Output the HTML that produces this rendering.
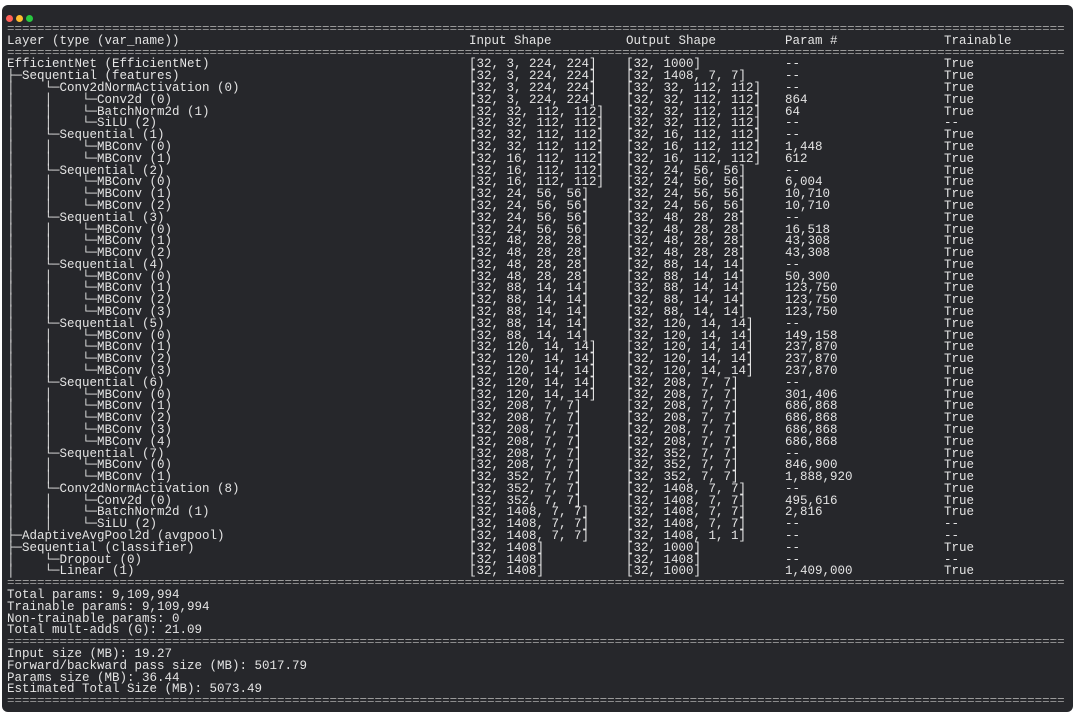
<!DOCTYPE html>
<html><head><meta charset="utf-8"><style>
html,body{margin:0;padding:0;background:#fff;width:1080px;height:716px;overflow:hidden}
.win{position:absolute;left:2px;top:5px;width:1071px;height:707px;background:#26272b;border-radius:6px}
.dot{position:absolute;top:10px;width:7px;height:7px;border-radius:50%}
.t{position:absolute;left:0;top:0;font-family:"Liberation Mono","DejaVu Sans Mono",monospace;font-size:12.5px;color:#e4e4e4;}
.l{position:absolute;left:5px;height:11.8px;line-height:11.8px;white-space:pre}
.l span{position:absolute;top:0;white-space:pre}
.sep{color:#9a9a9a}
</style></head><body>
<div class="win">
<div class="dot" style="left:4px;background:#ff5f57"></div>
<div class="dot" style="left:14px;background:#febc2e"></div>
<div class="dot" style="left:24px;background:#28c840"></div>
<div class="t" id="t"></div>
</div>
<script>
var rows=[
["EfficientNet (EfficientNet)","[32, 3, 224, 224]","[32, 1000]","--","True"],
["├─Sequential (features)","[32, 3, 224, 224]","[32, 1408, 7, 7]","--","True"],
["│    └─Conv2dNormActivation (0)","[32, 3, 224, 224]","[32, 32, 112, 112]","--","True"],
["│    │    └─Conv2d (0)","[32, 3, 224, 224]","[32, 32, 112, 112]","864","True"],
["│    │    └─BatchNorm2d (1)","[32, 32, 112, 112]","[32, 32, 112, 112]","64","True"],
["│    │    └─SiLU (2)","[32, 32, 112, 112]","[32, 32, 112, 112]","--","--"],
["│    └─Sequential (1)","[32, 32, 112, 112]","[32, 16, 112, 112]","--","True"],
["│    │    └─MBConv (0)","[32, 32, 112, 112]","[32, 16, 112, 112]","1,448","True"],
["│    │    └─MBConv (1)","[32, 16, 112, 112]","[32, 16, 112, 112]","612","True"],
["│    └─Sequential (2)","[32, 16, 112, 112]","[32, 24, 56, 56]","--","True"],
["│    │    └─MBConv (0)","[32, 16, 112, 112]","[32, 24, 56, 56]","6,004","True"],
["│    │    └─MBConv (1)","[32, 24, 56, 56]","[32, 24, 56, 56]","10,710","True"],
["│    │    └─MBConv (2)","[32, 24, 56, 56]","[32, 24, 56, 56]","10,710","True"],
["│    └─Sequential (3)","[32, 24, 56, 56]","[32, 48, 28, 28]","--","True"],
["│    │    └─MBConv (0)","[32, 24, 56, 56]","[32, 48, 28, 28]","16,518","True"],
["│    │    └─MBConv (1)","[32, 48, 28, 28]","[32, 48, 28, 28]","43,308","True"],
["│    │    └─MBConv (2)","[32, 48, 28, 28]","[32, 48, 28, 28]","43,308","True"],
["│    └─Sequential (4)","[32, 48, 28, 28]","[32, 88, 14, 14]","--","True"],
["│    │    └─MBConv (0)","[32, 48, 28, 28]","[32, 88, 14, 14]","50,300","True"],
["│    │    └─MBConv (1)","[32, 88, 14, 14]","[32, 88, 14, 14]","123,750","True"],
["│    │    └─MBConv (2)","[32, 88, 14, 14]","[32, 88, 14, 14]","123,750","True"],
["│    │    └─MBConv (3)","[32, 88, 14, 14]","[32, 88, 14, 14]","123,750","True"],
["│    └─Sequential (5)","[32, 88, 14, 14]","[32, 120, 14, 14]","--","True"],
["│    │    └─MBConv (0)","[32, 88, 14, 14]","[32, 120, 14, 14]","149,158","True"],
["│    │    └─MBConv (1)","[32, 120, 14, 14]","[32, 120, 14, 14]","237,870","True"],
["│    │    └─MBConv (2)","[32, 120, 14, 14]","[32, 120, 14, 14]","237,870","True"],
["│    │    └─MBConv (3)","[32, 120, 14, 14]","[32, 120, 14, 14]","237,870","True"],
["│    └─Sequential (6)","[32, 120, 14, 14]","[32, 208, 7, 7]","--","True"],
["│    │    └─MBConv (0)","[32, 120, 14, 14]","[32, 208, 7, 7]","301,406","True"],
["│    │    └─MBConv (1)","[32, 208, 7, 7]","[32, 208, 7, 7]","686,868","True"],
["│    │    └─MBConv (2)","[32, 208, 7, 7]","[32, 208, 7, 7]","686,868","True"],
["│    │    └─MBConv (3)","[32, 208, 7, 7]","[32, 208, 7, 7]","686,868","True"],
["│    │    └─MBConv (4)","[32, 208, 7, 7]","[32, 208, 7, 7]","686,868","True"],
["│    └─Sequential (7)","[32, 208, 7, 7]","[32, 352, 7, 7]","--","True"],
["│    │    └─MBConv (0)","[32, 208, 7, 7]","[32, 352, 7, 7]","846,900","True"],
["│    │    └─MBConv (1)","[32, 352, 7, 7]","[32, 352, 7, 7]","1,888,920","True"],
["│    └─Conv2dNormActivation (8)","[32, 352, 7, 7]","[32, 1408, 7, 7]","--","True"],
["│    │    └─Conv2d (0)","[32, 352, 7, 7]","[32, 1408, 7, 7]","495,616","True"],
["│    │    └─BatchNorm2d (1)","[32, 1408, 7, 7]","[32, 1408, 7, 7]","2,816","True"],
["│    │    └─SiLU (2)","[32, 1408, 7, 7]","[32, 1408, 7, 7]","--","--"],
["├─AdaptiveAvgPool2d (avgpool)","[32, 1408, 7, 7]","[32, 1408, 1, 1]","--","--"],
["├─Sequential (classifier)","[32, 1408]","[32, 1000]","--","True"],
["│    └─Dropout (0)","[32, 1408]","[32, 1408]","--","--"],
["│    └─Linear (1)","[32, 1408]","[32, 1000]","1,409,000","True"]
];
var S="=".repeat(141);
var lines=[];
lines.push({sep:1});
lines.push({c:["Layer (type (var_name))","Input Shape","Output Shape","Param #","Trainable"]});
lines.push({sep:1});
rows.forEach(function(r){lines.push({c:r})});
lines.push({sep:1});
["Total params: 9,109,994","Trainable params: 9,109,994","Non-trainable params: 0","Total mult-adds (G): 21.09"].forEach(function(s){lines.push({c:[s]})});
lines.push({sep:1});
["Input size (MB): 19.27","Forward/backward pass size (MB): 5017.79","Params size (MB): 36.44","Estimated Total Size (MB): 5073.49"].forEach(function(s){lines.push({c:[s]})});
lines.push({sep:1});
var xs=[0,462,619,778,937];
var h="";
lines.forEach(function(L,i){
 var top=(19.1+i*11.79).toFixed(2);
 h+='<div class="l" style="top:'+top+'px">';
 if(L.sep){h+='<span class="sep" style="left:0">'+S+'</span>';}
 else L.c.forEach(function(t,j){h+='<span style="left:'+xs[j]+'px">'+t+'</span>';});
 h+='</div>';
});
document.getElementById("t").innerHTML=h;
</script>
</body></html>
